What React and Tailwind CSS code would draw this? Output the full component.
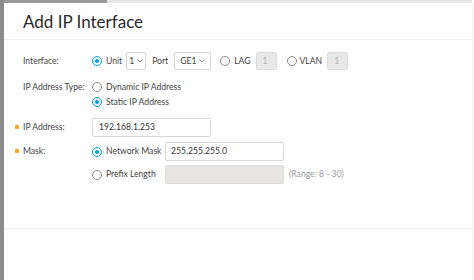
import React from 'react';

const font = { fontFamily: 'Lato, "Liberation Sans", sans-serif' };

function Radio({ checked }) {
  return (
    <span
      className={`w-[10px] h-[10px] rounded-full border flex items-center justify-center shrink-0 bg-white ${
        checked ? 'border-[#049fd9]' : 'border-[#8a8a8a]'
      }`}
    >
      {checked && <span className="w-[4px] h-[4px] rounded-full bg-[#049fd9]" />}
    </span>
  );
}

function Chevron() {
  return (
    <svg width="6" height="4" viewBox="0 0 6 4" className="ml-[3px]">
      <path d="M0.5 0.5 L3 3 L5.5 0.5" fill="none" stroke="#555" strokeWidth="0.8" />
    </svg>
  );
}

function Required() {
  return <span className="absolute -left-[8px] top-1/2 -translate-y-1/2 w-[4px] h-[4px] bg-[#f5a623] rounded-[1px]" />;
}

export default function App() {
  return (
    <div className="w-[474px] h-[280px] flex overflow-hidden bg-white text-[#333] whitespace-nowrap" style={font}>
      {/* page behind the dialog */}
      <div className="w-[4px] h-[280px] bg-[#8c8c8c] shrink-0" />

      <div className="flex-1 flex flex-col h-[280px]">
        <div className="h-[3px] flex shrink-0">
          <div className="w-[103px] bg-[#9a9a9a]" />
          <div className="flex-1 bg-[#e4e4e4]" />
          <div className="w-[2px] bg-white" />
        </div>

        <div className="flex-1 flex flex-col border-r border-[#f0f0f0] mr-[1px]">
          {/* Header */}
          <div className="h-[37px] flex items-center pl-[19px] border-b border-[#ececec] shrink-0">
            <h1 className="text-[17px] text-[#2a2a2a] leading-none">Add IP Interface</h1>
          </div>

          {/* Body */}
          <div className="pl-[19px] pt-[12px] text-[8.6px] text-[#444] h-[189px] border-b border-[#eeeeee] shrink-0">
            <div className="flex items-center h-[18px]">
              <span className="w-[69px]">Interface:</span>
              <Radio checked />
              <span className="ml-[4px]">Unit</span>
              <span className="ml-[4px] h-[18px] w-[20px] border border-[#d6d6d6] rounded-[2px] flex items-center justify-center">
                1<Chevron />
              </span>
              <span className="ml-[6px]">Port</span>
              <span className="ml-[6px] h-[18px] w-[37px] border border-[#d6d6d6] rounded-[2px] flex items-center justify-between px-[5px]">
                GE1<Chevron />
              </span>
              <span className="ml-[9px]"><Radio /></span>
              <span className="ml-[4px]">LAG</span>
              <span className="ml-[5px] h-[18px] w-[21px] border border-[#dcdcdc] bg-[#e8e8e8] rounded-[2px] flex items-center pl-[6px] text-[#b0b0b0]">1</span>
              <span className="ml-[10px]"><Radio /></span>
              <span className="ml-[3px]">VLAN</span>
              <span className="ml-[5px] h-[18px] w-[21px] border border-[#dcdcdc] bg-[#e8e8e8] rounded-[2px] flex items-center pl-[6px] text-[#b0b0b0]">1</span>
            </div>

            <div className="flex mt-[10px]">
              <span className="w-[69px] h-[14px] flex items-center">IP Address Type:</span>
              <div className="flex flex-col">
                <div className="flex items-center h-[14px]">
                  <Radio />
                  <span className="ml-[4px]">Dynamic IP Address</span>
                </div>
                <div className="flex items-center h-[14px] mt-[1px]">
                  <Radio checked />
                  <span className="ml-[4px]">Static IP Address</span>
                </div>
              </div>
            </div>

            <div className="flex items-center mt-[9px]">
              <span className="w-[69px] relative">
                <Required />
                IP Address:
              </span>
              <span className="h-[19px] w-[119px] border border-[#d6d6d6] rounded-[2px] flex items-center pl-[6px] text-[#333]">
                192.168.1.253
              </span>
            </div>

            <div className="flex items-center mt-[5px]">
              <span className="w-[69px] relative">
                <Required />
                Mask:
              </span>
              <Radio checked />
              <span className="ml-[4px] w-[59px]">Network Mask</span>
              <span className="h-[19px] w-[119px] border border-[#d6d6d6] rounded-[2px] flex items-center pl-[5px] text-[#333]">
                255.255.255.0
              </span>
            </div>

            <div className="flex items-center mt-[4px]">
              <span className="w-[69px]" />
              <Radio />
              <span className="ml-[4px] w-[59px]">Prefix Length</span>
              <span className="h-[19px] w-[119px] border border-[#dcdcdc] bg-[#e6e5e3] rounded-[2px]" />
              <span className="ml-[5px] text-[#9a9a9a]">(Range: 8 - 30)</span>
            </div>
          </div>

          <div className="flex-1" />
        </div>
      </div>
    </div>
  );
}
